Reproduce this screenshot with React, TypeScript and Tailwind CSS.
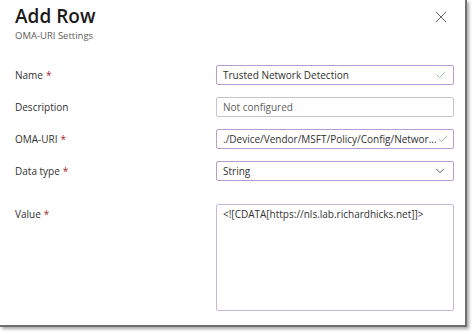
import { Check, ChevronDown, X } from "lucide-react";

const font = { fontFamily: '"Open Sans", "Noto Sans", sans-serif' };

const Label = ({ text, required }: { text: string; required?: boolean }) => (
  <div className="w-[201px] shrink-0 text-[10px] text-[#323130]">
    {text}
    {required && <span className="ml-[3px] text-[#a4262c]">*</span>}
  </div>
);

const Field = ({
  value,
  muted,
  check,
  chevron,
  purple,
}: {
  value: string;
  muted?: boolean;
  check?: boolean;
  chevron?: boolean;
  purple?: boolean;
}) => (
  <div
    className={`flex h-[20px] w-[238px] items-center justify-between rounded-[2px] border pl-[6px] pr-[6px] ${
      purple ? "border-[#b89ccf]" : "border-[#c8c6c4]"
    }`}
  >
    <span className={`whitespace-nowrap text-[10px] ${muted ? "text-[#605e5c]" : "text-[#323130]"}`}>{value}</span>
    {check && <Check className="h-[12px] w-[12px] shrink-0 text-[#7bb36e]" strokeWidth={1.5} />}
    {chevron && <ChevronDown className="h-[14px] w-[14px] shrink-0 text-[#323130]" strokeWidth={1.3} />}
  </div>
);

export default function App() {
  return (
    <div className="h-[334px] w-[474px] overflow-hidden bg-white" style={font}>
      <div className="relative h-[327px] w-[467px] border-b-2 border-r-2 border-[#6f6f6f] bg-white shadow-[2px_2px_3px_rgba(0,0,0,0.35)]">
        <div className="flex items-start justify-between pl-[15px] pr-[14px] pt-[4px]">
          <div>
            <h1 className="text-[19px] font-semibold leading-[25px] text-[#1b1a19]">Add Row</h1>
            <p className="text-[9.5px] leading-[13px] text-[#605e5c]">OMA-URI Settings</p>
          </div>
          <X className="mt-[3px] h-[20px] w-[20px] text-[#323130]" strokeWidth={0.9} />
        </div>

        <div className="mt-[23px] flex flex-col gap-3 pl-[15px]">
          <div className="flex items-center">
            <Label text="Name" required />
            <Field value="Trusted Network Detection" check purple />
          </div>
          <div className="flex items-center">
            <Label text="Description" />
            <Field value="Not configured" muted />
          </div>
          <div className="flex items-center">
            <Label text="OMA-URI" required />
            <Field value="./Device/Vendor/MSFT/Policy/Config/Networ..." check purple />
          </div>
          <div className="flex items-center">
            <Label text="Data type" required />
            <Field value="String" chevron purple />
          </div>
          <div className="mt-[11px] flex items-start">
            <div className="pt-[3px]">
              <Label text="Value" required />
            </div>
            <div className="h-[107px] w-[238px] rounded-[2px] border border-[#c9b5d6] px-[6px] py-[2px] text-[10px] text-[#323130]">
              {"<![CDATA[https://nls.lab.richardhicks.net]]>"}
            </div>
          </div>
        </div>
      </div>
    </div>
  );
}
